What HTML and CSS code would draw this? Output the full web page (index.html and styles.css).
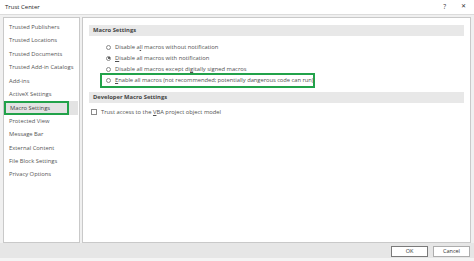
FILE: index.html
```html
<!DOCTYPE html>
<html>
<head>
<meta charset="utf-8">
<link rel="stylesheet" href="styles.css">
</head>
<body>
<div class="dialog">
  <div class="titlebar">
    <span class="title">Trust Center</span>
    <span class="tb-icons"><span class="help">?</span><span class="close">✕</span></span>
  </div>
  <div class="main">
    <div class="sidebar">
      <div class="item">Trusted Publishers</div>
      <div class="item">Trusted Locations</div>
      <div class="item">Trusted Documents</div>
      <div class="item">Trusted Add-in Catalogs</div>
      <div class="item">Add-ins</div>
      <div class="item">ActiveX Settings</div>
      <div class="item selected"><span class="hl">Macro Settings</span></div>
      <div class="item">Protected View</div>
      <div class="item">Message Bar</div>
      <div class="item">External Content</div>
      <div class="item">File Block Settings</div>
      <div class="item">Privacy Options</div>
    </div>
    <div class="content">
      <div class="section-head">Macro Settings</div>
      <div class="options">
        <div class="opt"><span class="radio"></span><span>Disable a<u>l</u>l macros without notification</span></div>
        <div class="opt"><span class="radio checked"></span><span><u>D</u>isable all macros with notification</span></div>
        <div class="opt"><span class="radio"></span><span>Disable all macros except di<u>g</u>itally signed macros</span></div>
        <div class="opt highlight"><span class="radio"></span><span class="tight"><u>E</u>nable all macros (not recommended; potentially dangerous code can run)</span></div>
      </div>
      <div class="section-head dev">Developer Macro Settings</div>
      <div class="check-row"><span class="checkbox"></span><span>Trust access to the <u>V</u>BA project object model</span></div>
    </div>
  </div>
  <div class="footer">
    <button class="btn ok">OK</button>
    <button class="btn">Cancel</button>
  </div>
</div>
</body>
</html>
```
FILE: styles.css
```css
* { box-sizing: border-box; }
html, body { margin: 0; padding: 0; }
body {
  width: 474px;
  height: 261px;
  background: #f0f0f0;
  font-family: "Open Sans", "Noto Sans", sans-serif;
  font-size: 5.8px;
  color: #4a4a4a;
  overflow: hidden;
}
.dialog { width: 474px; height: 261px; display: flex; flex-direction: column; }
.titlebar {
  height: 15px;
  flex: none;
  background: #ffffff;
  border-bottom: 1px solid #dcdcdc;
  display: flex;
  align-items: center;
  justify-content: space-between;
  padding: 0 8px 1px 5px;
}
.title { color: #1e1e1e; font-size: 6px; }
.tb-icons { display: flex; gap: 15px; color: #333; font-size: 6.5px; }
.close { font-size: 6px; }
.main {
  display: flex;
  gap: 2px;
  padding: 2px 3px 0 3px;
  height: 228px;
  flex: none;
}
.sidebar {
  width: 77px;
  background: #fff;
  border: 1px solid #c9c9c9;
  padding-top: 3px;
}
.item {
  height: 13.4px;
  line-height: 13.4px;
  padding-left: 5px;
  white-space: nowrap;
  color: #555;
}
.item.selected {
  background: #e3e3e3;
  padding-left: 0;
  margin-right: 1px;
}
.hl {
  display: inline-block;
  height: 14px;
  line-height: 10px;
  width: 65px;
  padding-left: 4px;
  border: 2px solid #22a24a;
  color: #444;
  vertical-align: top;
}
.content {
  flex: 1;
  background: #fff;
  border: 1px solid #c9c9c9;
  padding: 7px 6px 0 6px;
}
.section-head {
  background: #e8e8e8;
  height: 11px;
  line-height: 11px;
  padding-left: 4px;
  font-weight: 700;
  color: #444;
}
.options { padding: 5.5px 0 0 17px; display: flex; flex-direction: column; }
.opt {
  display: flex;
  align-items: center;
  height: 11px;
  white-space: nowrap;
  color: #505050;
}
.opt.highlight {
  width: 215px;
  height: 15px;
  margin-left: -6px;
  padding-left: 4px;
  border: 2px solid #22a24a;
  margin-top: -2px;
  margin-bottom: -2px;
}
.tight { letter-spacing: -0.04px; }
.radio {
  width: 5px;
  height: 5px;
  border: 1px solid #8a8a8a;
  border-radius: 50%;
  margin-right: 4px;
  flex: none;
  display: flex;
  align-items: center;
  justify-content: center;
  background: #fff;
}
.radio.checked::after {
  content: "";
  width: 2px;
  height: 2px;
  border-radius: 50%;
  background: #333;
}
.dev { margin-top: 6.5px; }
.check-row {
  display: flex;
  align-items: center;
  height: 11px;
  margin-top: 3px;
  padding-left: 2px;
  white-space: nowrap;
  color: #505050;
}
.checkbox {
  width: 6px;
  height: 6px;
  border: 1px solid #8a8a8a;
  margin-right: 4px;
  background: #fff;
}
u { text-decoration: underline; text-underline-offset: 1px; }
.footer {
  flex: 1;
  display: flex;
  justify-content: flex-end;
  align-items: flex-start;
  gap: 5px;
  padding: 3px 4px 0 0;
  background: #e6e6e6;
  border-bottom: 3px solid #f4f4f4;
}
.btn {
  width: 37px;
  height: 11px;
  padding: 0;
  font-family: inherit;
  font-size: 5.5px;
  color: #333;
  background: #fff;
  border: 1px solid #adadad;
  line-height: 9px;
}
.btn.ok { border-color: #7a7a7a; }
```
